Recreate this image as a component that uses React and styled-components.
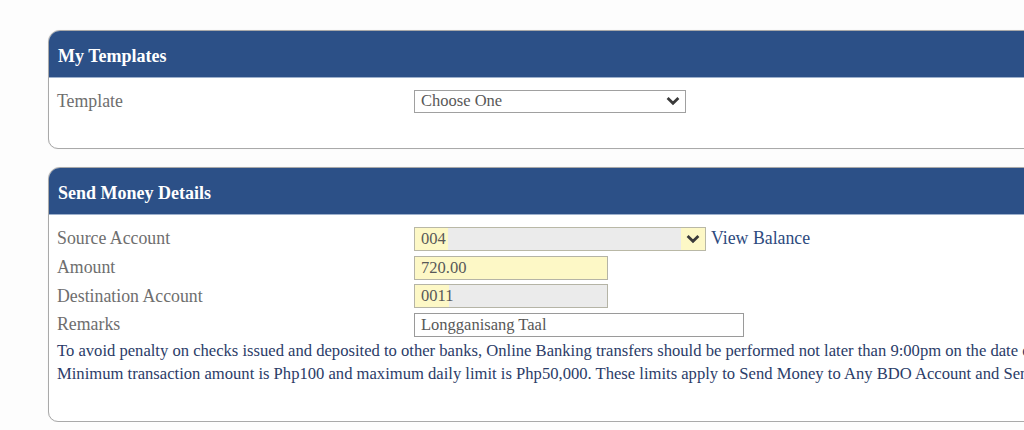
import React from "react";
import styled, { createGlobalStyle } from "styled-components";

const Global = createGlobalStyle`
  html, body { margin: 0; padding: 0; background: #fdfdfd; overflow: hidden; }
  body { font-family: "Liberation Serif", "Times New Roman", serif; font-size: 16px; }
`;

const Page = styled.div`
  display: flex;
  flex-direction: column;
  gap: 18px;
  padding: 30px 0 0 48px;
  width: 1400px;
`;

const Panel = styled.section`
  border: 1px solid #a9a9a9;
  border-radius: 12px 12px 10px 10px;
  background: #fff;
  overflow: hidden;
  box-shadow: 0 0 1px rgba(0,0,0,0.15);
`;

const Header = styled.div`
  box-sizing: border-box;
  height: 47px;
  background: #2c5087;
  border-bottom: 1px solid #9db0cc;
  display: flex;
  align-items: center;
  padding: 4px 0 0 9px;
  color: #fff;
  font-family: "Liberation Serif", "Times New Roman", serif;
  font-weight: bold;
  font-size: 18px;
`;

const Body = styled.div`
  padding: ${(p) => p.$pad};
  display: flex;
  flex-direction: column;
`;

const Row = styled.div`
  display: grid;
  grid-template-columns: 357px auto;
  align-items: center;
  height: ${(p) => p.$h || 29}px;
`;

const Label = styled.div`
  color: #6e6e6e;
  font-family: "Liberation Serif", "Times New Roman", serif;
  font-size: 17.8px;
`;

const Field = styled.div`
  display: flex;
  align-items: center;
  gap: 5px;
`;

const Box = styled.div`
  position: relative;
  box-sizing: border-box;
  width: ${(p) => p.$w}px;
  height: ${(p) => p.$h || 24}px;
  border: 1px solid ${(p) => p.$border || "#a8a8a8"};
  background: ${(p) => p.$bg || "#fff"};
  color: #585858;
  font-family: "Liberation Serif", "Times New Roman", serif;
  font-size: 16.5px;
  display: flex;
  align-items: center;
  padding-left: 6px;
  overflow: hidden;
`;

const Text = styled.span`
  position: relative;
  z-index: 1;
`;

const Yellow = styled.span`
  position: absolute;
  top: 0;
  bottom: 0;
  ${(p) => (p.$right ? "right: 0;" : "left: 0;")}
  width: ${(p) => p.$w}px;
  background: #fdf8c6;
`;

const Chevron = styled.svg`
  position: absolute;
  right: ${(p) => p.$r || 7}px;
  top: 50%;
  transform: translateY(-50%);
  z-index: 1;
`;

const Link = styled.a`
  color: #2d4a7e;
  font-family: "Liberation Serif", "Times New Roman", serif;
  font-size: 17.8px;
  text-decoration: none;
`;

const Note = styled.p`
  margin: 0;
  color: #2b3c68;
  font-family: "Liberation Serif", "Times New Roman", serif;
  font-size: 16.6px;
  line-height: 23px;
  white-space: nowrap;
`;

const ChevronIcon = ({ r }) => (
  <Chevron $r={r} width="14" height="10" viewBox="0 0 14 10">
    <path d="M1.6 2 L7 7.2 L12.4 2" fill="none" stroke="#3a3a3a" strokeWidth="2.8" />
  </Chevron>
);

export default function App() {
  return (
    <>
      <Global />
      <Page>
        <Panel>
          <Header>My Templates</Header>
          <Body $pad="11px 0 35px 8px">
            <Row $h={24}>
              <Label>Template</Label>
              <Field>
                <Box $w={272} $h={23} $border="#a0a0a0">
                  <Text>Choose One</Text>
                  <ChevronIcon r={5} />
                </Box>
              </Field>
            </Row>
          </Body>
        </Panel>

        <Panel>
          <Header>Send Money Details</Header>
          <Body $pad="9px 0 36px 8px">
            <Row>
              <Label>Source Account</Label>
              <Field>
                <Box $w={292} $bg="#ebebeb" $border="#b9b8a6">
                  <Yellow $w={33} />
                  <Text>004</Text>
                  <Yellow $right $w={24} />
                  <ChevronIcon r={5} />
                </Box>
                <Link>View Balance</Link>
              </Field>
            </Row>
            <Row>
              <Label>Amount</Label>
              <Field>
                <Box $w={194} $bg="#fdf8c6" $border="#b5b4a6">
                  <Text>720.00</Text>
                </Box>
              </Field>
            </Row>
            <Row $h={28}>
              <Label>Destination Account</Label>
              <Field>
                <Box $w={194} $bg="#ebebeb" $border="#b5b4a6">
                  <Yellow $w={34} />
                  <Text>0011</Text>
                </Box>
              </Field>
            </Row>
            <Row>
              <Label>Remarks</Label>
              <Field>
                <Box $w={330} $border="#9a9a9a">
                  <Text>Longganisang Taal</Text>
                </Box>
              </Field>
            </Row>
            <Note>
              To avoid penalty on checks issued and deposited to other banks, Online Banking transfers should be performed not later than 9:00pm on the date of issue.
            </Note>
            <Note>
              Minimum transaction amount is Php100 and maximum daily limit is Php50,000. These limits apply to Send Money to Any BDO Account and Send Money to Other Banks.
            </Note>
          </Body>
        </Panel>
      </Page>
    </>
  );
}
